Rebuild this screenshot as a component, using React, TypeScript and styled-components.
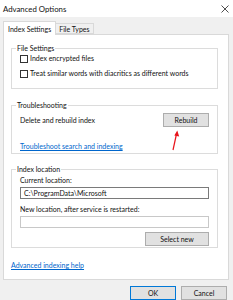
import React from "react";
import styled, { createGlobalStyle } from "styled-components";

const Global = createGlobalStyle`
  html, body { margin: 0; padding: 0; background: #f0f0f0; }
  body { font-family: Lato, "Noto Sans", sans-serif; font-size: 7px; color: #111; }
  * { box-sizing: border-box; }
`;

const Dialog = styled.div`
  width: 233px;
  height: 300px;
  overflow: hidden;
  display: flex;
  flex-direction: column;
  background: #f0f0f0;
  position: relative;
`;

const TitleBar = styled.div`
  height: 18px;
  background: #fff;
  display: flex;
  align-items: center;
  justify-content: space-between;
  padding: 0 4px 0 3px;
  font-size: 7.8px;
`;

const Close = styled.svg`
  width: 8px;
  height: 8px;
`;

const Body = styled.div`
  padding: 4px 4px 0 3px;
  display: flex;
  flex-direction: column;
`;

const TabRow = styled.div`
  display: flex;
  align-items: flex-end;
  height: 13px;
  position: relative;
  z-index: 1;
`;

const Tab = styled.div<{ $active?: boolean }>`
  height: ${(p) => (p.$active ? 14 : 11)}px;
  padding: 0 ${(p) => (p.$active ? 4 : 3)}px;
  display: flex;
  align-items: center;
  background: ${(p) => (p.$active ? "#fff" : "#f0f0f0")};
  border: 1px solid #d9d9d9;
  border-bottom: ${(p) => (p.$active ? "none" : "1px solid #d9d9d9")};
  margin-left: ${(p) => (p.$active ? 0 : -1)}px;
  margin-bottom: ${(p) => (p.$active ? -1 : 0)}px;
  font-size: 7px;
  white-space: nowrap;
`;

const Panel = styled.div`
  background: #fff;
  border: 1px solid #d9d9d9;
  height: 246px;
  padding: 9px 10px 0 7px;
  display: flex;
  flex-direction: column;
`;

const Group = styled.fieldset<{ $h: number; $mt?: number }>`
  margin: ${(p) => p.$mt ?? 0}px 0 0 0;
  height: ${(p) => p.$h}px;
  border: 1px solid #dcdcdc;
  padding: 1px 8px 0 8px;
  min-width: 0;
  display: flex;
  flex-direction: column;
`;

const Legend = styled.legend`
  padding: 0 1px;
  margin-left: -4px;
  font-size: 7px;
  line-height: 8px;
`;

const CheckRow = styled.label<{ $mt: number }>`
  display: flex;
  align-items: center;
  gap: 2px;
  margin-top: ${(p) => p.$mt}px;
  font-size: 7px;
  line-height: 9px;
  white-space: nowrap;
`;

const Box = styled.span`
  width: 8px;
  height: 8px;
  border: 1px solid #333;
  background: #fff;
  flex: none;
`;

const Row = styled.div<{ $mt: number }>`
  display: flex;
  align-items: center;
  justify-content: space-between;
  margin-top: ${(p) => p.$mt}px;
`;

const Label = styled.div<{ $mt?: number }>`
  font-size: 7px;
  line-height: 9px;
  margin-top: ${(p) => p.$mt ?? 0}px;
  white-space: nowrap;
`;

const Button = styled.div<{ $w: number; $primary?: boolean }>`
  width: ${(p) => p.$w}px;
  height: 14px;
  background: #e1e1e1;
  border: 1px solid ${(p) => (p.$primary ? "#0078d7" : "#adadad")};
  display: flex;
  align-items: center;
  justify-content: center;
  font-size: 7px;
`;

const Link = styled.a<{ $mt: number }>`
  color: #0066cc;
  text-decoration: underline;
  font-size: 7px;
  line-height: 9px;
  margin-top: ${(p) => p.$mt}px;
  white-space: nowrap;
`;

const Input = styled.div<{ $mt: number }>`
  height: 12px;
  border: 1px solid #7a7a7a;
  background: #fff;
  margin-top: ${(p) => p.$mt}px;
  padding: 0 3px;
  display: flex;
  align-items: center;
  font-size: 7px;
  white-space: nowrap;
`;

const InputLight = styled(Input)`
  border-color: #c8c8c8;
`;

const RightRow = styled.div<{ $mt: number }>`
  display: flex;
  justify-content: flex-end;
  margin-top: ${(p) => p.$mt}px;
`;

const Footer = styled.div`
  display: flex;
  justify-content: flex-end;
  gap: 5px;
  padding: 6px 2px 0 0;
`;

const Arrow = styled.svg`
  position: absolute;
  left: 169px;
  top: 129px;
  width: 12px;
  height: 22px;
`;

export default function App() {
  return (
    <>
      <Global />
      <Dialog>
        <TitleBar>
          <span>Advanced Options</span>
          <Close viewBox="0 0 8 8">
            <path d="M0.5 0.5 L7.5 7.5 M7.5 0.5 L0.5 7.5" stroke="#222" strokeWidth="0.8" fill="none" />
          </Close>
        </TitleBar>
        <Body>
          <TabRow>
            <Tab $active>Index Settings</Tab>
            <Tab>File Types</Tab>
          </TabRow>
          <Panel>
            <Group $h={45}>
              <Legend>File Settings</Legend>
              <CheckRow $mt={1}>
                <Box />
                Index encrypted files
              </CheckRow>
              <CheckRow $mt={6}>
                <Box />
                Treat similar words with diacritics as different words
              </CheckRow>
            </Group>
            <Group $h={53} $mt={12}>
              <Legend>Troubleshooting</Legend>
              <Row $mt={3}>
                <Label>Delete and rebuild index</Label>
                <Button $w={46}>Rebuild</Button>
              </Row>
              <Link $mt={15}>Troubleshoot search and indexing</Link>
            </Group>
            <Group $h={83} $mt={11}>
              <Legend>Index location</Legend>
              <Label $mt={2}>Current location:</Label>
              <Input $mt={2}>C:\ProgramData\Microsoft</Input>
              <Label $mt={6}>New location, after service is restarted:</Label>
              <InputLight $mt={2} />
              <RightRow $mt={4}>
                <Button $w={64}>Select new</Button>
              </RightRow>
            </Group>
            <Link $mt={13}>Advanced indexing help</Link>
          </Panel>
          <Footer>
            <Button $w={46} $primary>OK</Button>
            <Button $w={46}>Cancel</Button>
          </Footer>
        </Body>
        <Arrow viewBox="0 0 12 22">
          <path d="M4 21 L7.5 5" stroke="#e8141b" strokeWidth="1.2" fill="none" />
          <path d="M8.3 1.5 L10.2 7.5 L5.3 6.4 Z" fill="#e8141b" />
        </Arrow>
      </Dialog>
    </>
  );
}
